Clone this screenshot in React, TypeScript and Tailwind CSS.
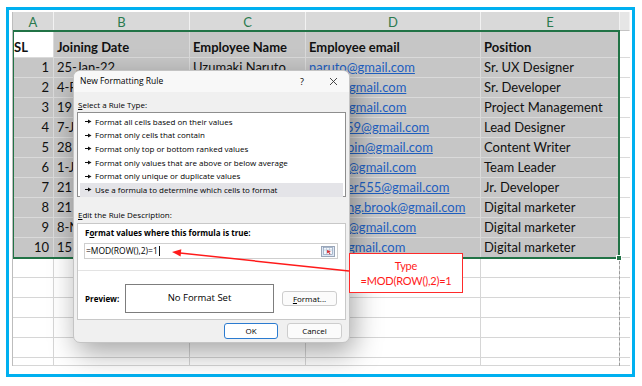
const colW = ["w-[41px]", "w-[136px]", "w-[116px]", "w-[175px]", "w-[139px]", "w-[10px]"];
const letters = ["A", "B", "C", "D", "E", ""];

// rows 2-10 sit under the dialog: only what shows beside it is kept
const rows = [
  { sl: "1", date: "25-Jan-22", name: "Uzumaki Naruto", email: "naruto@gmail.com", off: "pl-[3px]", pos: "Sr. UX Designer" },
  { sl: "2", date: "4-F", name: "", email: "gmail.com", off: "pl-[43px]", pos: "Sr. Developer" },
  { sl: "3", date: "19", name: "", email: "gmail.com", off: "pl-[43px]", pos: "Project Management" },
  { sl: "4", date: "7-J", name: "", email: "59@gmail.com", off: "pl-[40px]", pos: "Lead Designer" },
  { sl: "5", date: "28", name: "", email: "bin@gmail.com", off: "pl-[41px]", pos: "Content Writer" },
  { sl: "6", date: "1-J", name: "", email: "@gmail.com", off: "pl-[42px]", pos: "Team Leader" },
  { sl: "7", date: "21", name: "", email: "er555@gmail.com", off: "pl-[41px]", pos: "Jr. Developer" },
  { sl: "8", date: "21", name: "", email: "ng.brook@gmail.com", off: "pl-[41px]", pos: "Digital marketer" },
  { sl: "9", date: "8-N", name: "", email: "@gmail.com", off: "pl-[42px]", pos: "Digital marketer" },
  { sl: "10", date: "15", name: "", email: "gmail.com", off: "pl-[42px]", pos: "Digital marketer" },
];

const ruleTypes = [
  "Format all cells based on their values",
  "Format only cells that contain",
  "Format only top or bottom ranked values",
  "Format only values that are above or below average",
  "Format only unique or duplicate values",
  "Use a formula to determine which cells to format",
];

function Pointer() {
  return (
    <svg width="7" height="5" viewBox="0 0 7 5" className="shrink-0">
      <path d="M0 2.5H3.5" stroke="#111" strokeWidth="1" />
      <polygon points="3,0.6 6.5,2.5 3,4.4" fill="#111" />
    </svg>
  );
}

type Row = (typeof rows)[number];

function DataRow({ r }: { r: Row }) {
  const cell = "shrink-0 border-r border-b border-[#dadada] bg-[#c6c6c6] flex items-center whitespace-nowrap";
  return (
    <div className="flex h-[20px]">
      <div className={`${colW[0]} ${cell} justify-end pr-[4px]`}>{r.sl}</div>
      <div className={`${colW[1]} ${cell} pl-[3px]`}>{r.date}</div>
      <div className={`${colW[2]} ${cell} pl-[3px]`}>{r.name}</div>
      <div className={`${colW[3]} ${cell} ${r.off}`}>
        <span className="text-[#1f5fbf] underline">{r.email}</span>
      </div>
      <div className={`${colW[4]} ${cell} pl-[3px]`}>{r.pos}</div>
      <div className={`${colW[5]} shrink-0 border-b border-[#dadada] bg-white`} />
    </div>
  );
}

function EmptyRow({ h }: { h: string }) {
  return (
    <div className={`flex ${h}`}>
      {colW.map((w, i) => (
        <div key={i} className={`${w} shrink-0 border-b border-[#d6d6d6] ${i < 5 ? "border-r" : ""} bg-white`} />
      ))}
    </div>
  );
}

function Sheet() {
  const head = "shrink-0 bg-[#c6c6c6] flex items-end pl-[3px] border-r border-b border-[#dadada]";
  return (
    <div className="relative w-[618px] h-[354px] overflow-hidden border-l border-[#bdbdbd] font-['Lato'] text-[13px] text-[#111]">
      {/* column letters */}
      <div className="flex h-[19px]">
        {letters.map((l, i) => (
          <div
            key={i}
            className={`${colW[i]} shrink-0 flex items-center justify-center pt-[2px] border-r border-[#f2f2f2] ${i < 5 ? "bg-[#d9d9d9] text-[#2a7a4e]" : "bg-[#e6e6e6] border-b border-b-[#c4c4c4]"}`}
          >
            {l}
          </div>
        ))}
      </div>
      {/* header row */}
      <div className="flex h-[27px] font-bold">
        <div className={`${colW[0]} shrink-0 bg-white flex items-end pl-[1px] border-r border-b border-[#dadada]`}>SL</div>
        <div className={`${colW[1]} ${head}`}>Joining Date</div>
        <div className={`${colW[2]} ${head}`}>Employee Name</div>
        <div className={`${colW[3]} ${head}`}>Employee email</div>
        <div className={`${colW[4]} ${head}`}>Position</div>
        <div className={`${colW[5]} shrink-0 bg-white border-b border-[#dadada]`} />
      </div>
      {rows.map((r) => (
        <DataRow key={r.sl} r={r} />
      ))}
      <EmptyRow h="h-[20px]" />
      <EmptyRow h="h-[20px]" />
      <EmptyRow h="h-[20px]" />
      <EmptyRow h="h-[20px]" />
      <EmptyRow h="h-[20px]" />
      <EmptyRow h="h-[8px]" />

      {/* selection outline */}
      <div className="absolute left-[-1px] top-[18px] w-[608px] h-[229px] border-2 border-[#217346]">
        <div className="absolute right-[-4px] bottom-[-4px] w-[6px] h-[6px] bg-[#217346] border border-white" />
      </div>
      {/* page break */}
      <div className="absolute left-[606px] top-[249px] h-[110px] border-l border-dashed border-[#9a9a9a]" />
    </div>
  );
}

function Dialog() {
  return (
    <div className="absolute left-[73px] top-[70px] w-[277px] h-[273px] rounded-[7px] border border-[#c4c4c4] bg-[#f0f0f0] shadow-[4px_10px_28px_rgba(0,0,0,0.35)] overflow-hidden font-['Open_Sans'] text-black text-[8px]">
      <div className="h-[21px] flex items-center pl-[6px] bg-[#f8f8f8] text-[8.5px]">
        <span>New Formatting Rule</span>
        <span className="ml-auto text-[9px]">?</span>
        <svg width="9" height="9" viewBox="0 0 9 9" className="ml-[25px] mr-[11px]">
          <path d="M1 1L8 8M8 1L1 8" stroke="#333" strokeWidth="0.9" />
        </svg>
      </div>
      <div className="px-[3px]">
        <div className="mt-[7px] h-[12px] flex items-center pl-[1px]">
          <span>
            <u>S</u>elect a Rule Type:
          </span>
        </div>
        <div className="mt-[1px] h-[85px] bg-white border border-[#8e8e8e] pt-[2px] px-[2px]">
          {ruleTypes.map((t, i) => (
            <div
              key={t}
              className={`h-[13.6px] flex items-center gap-[3px] pl-[5px] ${i === 5 ? "bg-[#e4e4e8]" : ""}`}
            >
              <Pointer />
              <span>{t}</span>
            </div>
          ))}
        </div>
        <div className="mt-[12px] h-[12px] flex items-center pl-[1px]">
          <span>
            <u>E</u>dit the Rule Description:
          </span>
        </div>
        <div className="mt-[2px] h-[97px] bg-white border border-[#c8c8c8]">
          <div className="mt-[3px] h-[12px] flex items-center pl-[7px] font-bold">
            <span>
              F<u>o</u>rmat values where this formula is true:
            </span>
          </div>
          <div className="mt-[4px] ml-[6px] w-[254px] h-[16px] border border-[#cfcfcf] bg-white flex items-center pl-[1px] text-[8.5px]">
            <span>=MOD(ROW(),2)=1</span>
            <span className="ml-[1px] h-[10px] border-l border-[#111]" />
            <div className="ml-auto mr-[2px] w-[14px] h-[11px] border border-[#9aa6b8] bg-[#dfe8f5] flex items-center justify-center">
              <svg width="10" height="8" viewBox="0 0 10 8">
                <rect x="0.5" y="0.5" width="9" height="7" fill="#f4f7fb" stroke="#7f93b0" strokeWidth="0.6" />
                <path d="M0.5 3H9.5M3.5 0.5V7.5M6.5 0.5V7.5" stroke="#9fb0c8" strokeWidth="0.5" />
                <polygon points="4,3 8,4.5 6,5 7.5,7 6.8,7.4 5.4,5.4 4.2,6.6" fill="#d8262c" />
              </svg>
            </div>
          </div>
          <div className="mt-[11px] h-[1px] bg-[#e3e3e3]" />
          <div className="mt-[13px] flex items-center pl-[7px]">
            <div className="w-[40px] font-bold">Preview:</div>
            <div className="w-[149px] h-[29px] border border-[#7d7d7d] flex items-center justify-center text-[9.5px]">
              No Format Set
            </div>
            <div className="ml-[8px] w-[55px] h-[15px] rounded-[3px] border border-[#cdcdcd] bg-[#fbfbfb] flex items-center justify-center">
              <span>
                <u>F</u>ormat...
              </span>
            </div>
          </div>
        </div>
        <div className="mt-[3px] flex justify-end gap-[9px] pr-[4px]">
          <div className="w-[54px] h-[16px] rounded-[3px] border border-[#2b7bd0] bg-white flex items-center justify-center">OK</div>
          <div className="w-[55px] h-[16px] rounded-[3px] border border-[#cdcdcd] bg-[#fbfbfb] flex items-center justify-center">Cancel</div>
        </div>
      </div>
    </div>
  );
}

export default function App() {
  return (
    <div className="relative w-[642px] h-[386px] bg-white overflow-hidden">
      <div className="ml-[6px] mt-[7px] w-[629px] h-[370px] border-[3px] border-[#00b0f0] pt-[2px] pl-[3px]">
        <Sheet />
      </div>

      <Dialog />

      <svg width="642" height="386" className="absolute left-0 top-0 pointer-events-none">
        <line x1="349" y1="271" x2="180" y2="253" stroke="#ff1a1a" strokeWidth="1.5" />
        <polygon points="172,252 181.3,249.3 180.6,256.4" fill="#ff1a1a" />
      </svg>

      <div className="absolute left-[349px] top-[253px] w-[114px] h-[40px] border border-[#ff2a2a] bg-white flex flex-col items-center justify-center font-['Lato'] text-[11px] leading-[15px] tracking-[-0.2px] text-[#ff1a1a]">
        <span>Type</span>
        <span>=MOD(ROW(),2)=1</span>
      </div>
    </div>
  );
}
